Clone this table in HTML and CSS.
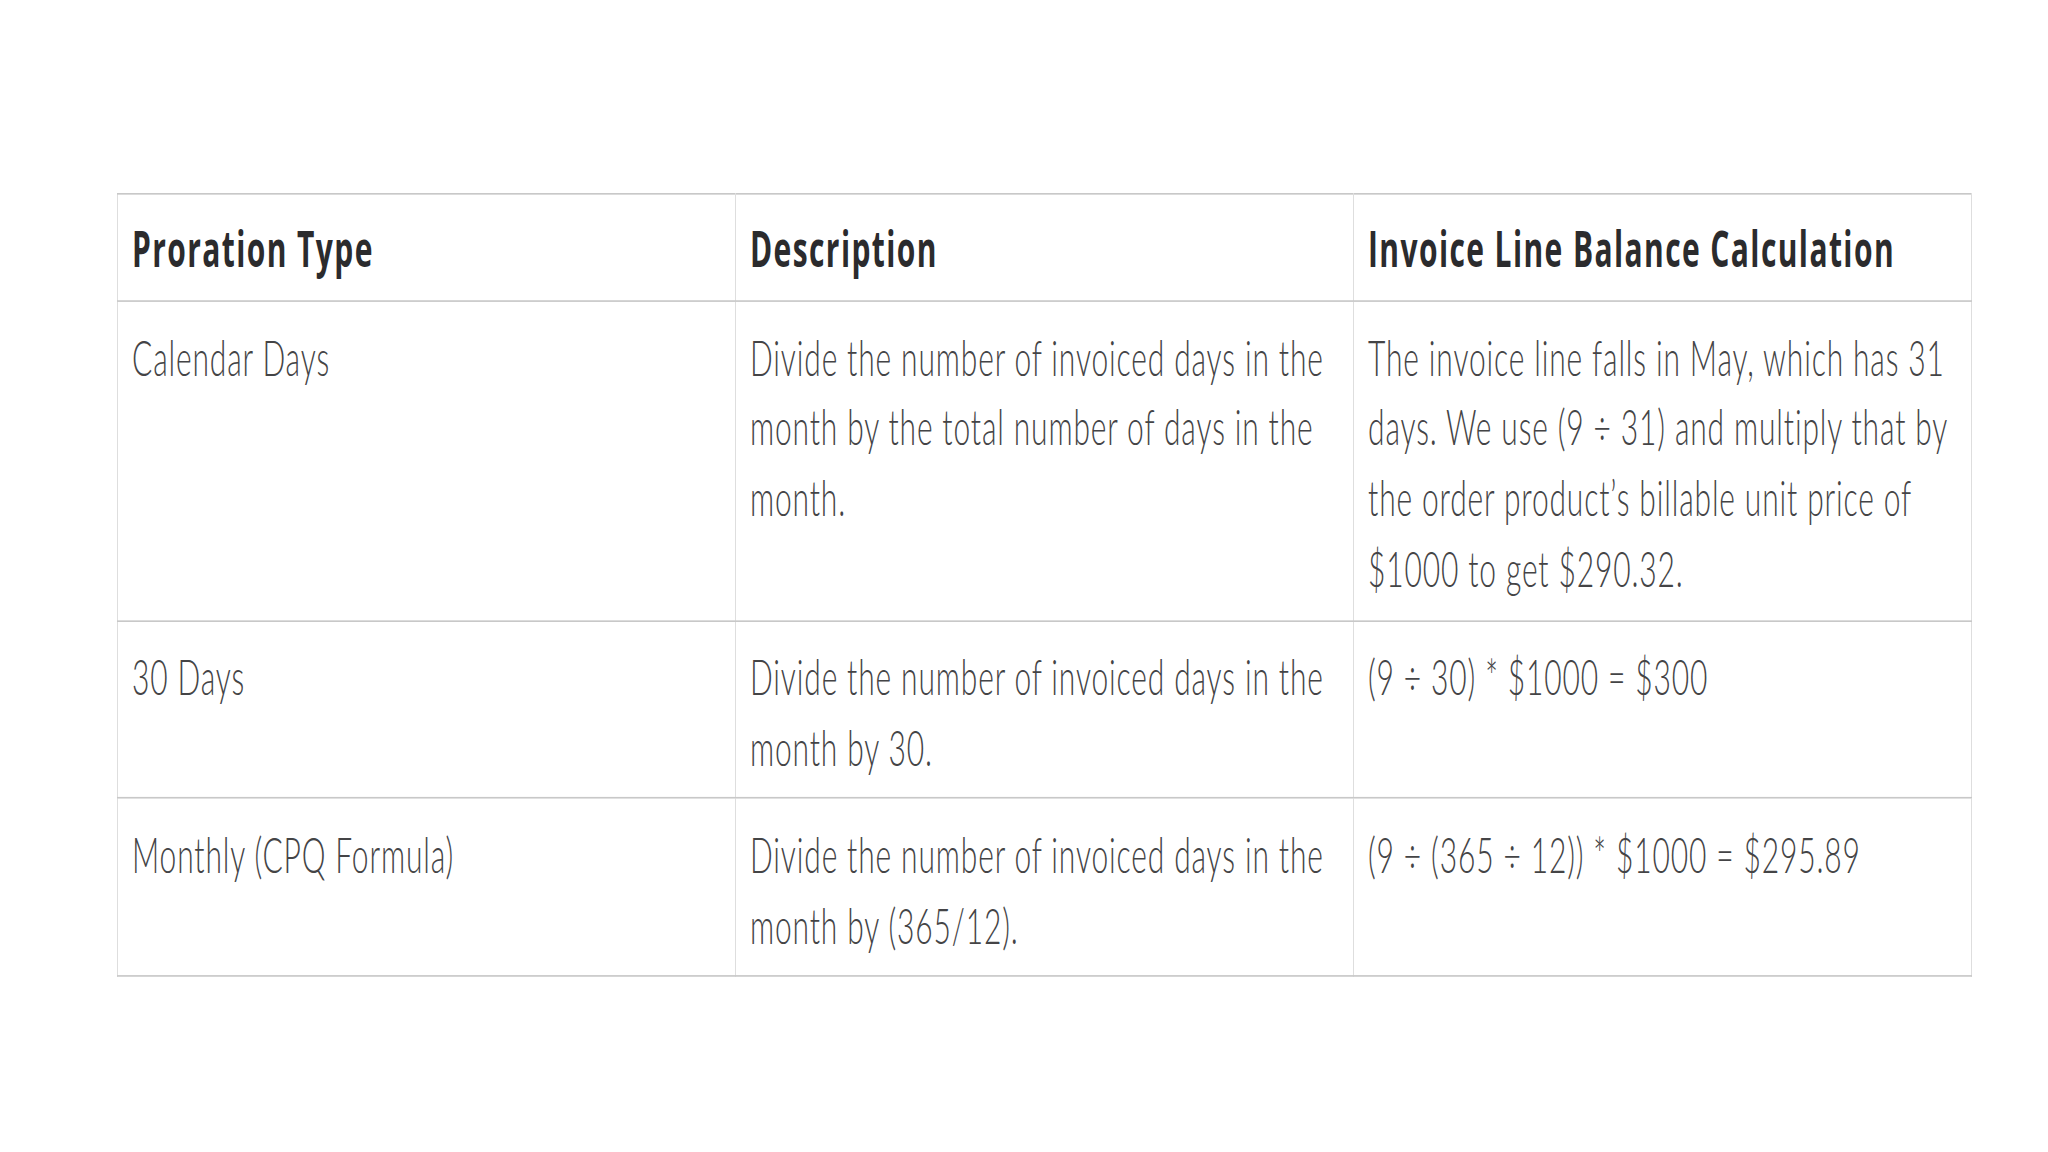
FILE: index.html
```html
<!DOCTYPE html>
<html lang="en">
<head>
<meta charset="utf-8">
<title>Proration Types</title>
<link rel="stylesheet" href="styles.css">
</head>
<body>
<div class="stage">
  <table class="proration">
    <colgroup><col class="c1"><col class="c2"><col class="c3"></colgroup>
    <thead>
      <tr>
        <th>Proration Type</th>
        <th>Description</th>
        <th>Invoice Line Balance Calculation</th>
      </tr>
    </thead>
    <tbody>
      <tr>
        <td>Calendar Days</td>
        <td>Divide the number of invoiced days in the month by the total number of days in the month.</td>
        <td>The invoice line falls in May, which has 31 days. We use (9 ÷ 31) and multiply that by the order product’s billable unit price of $1000 to get $290.32.</td>
      </tr>
      <tr>
        <td>30 Days</td>
        <td>Divide the number of invoiced days in the month by 30.</td>
        <td>(9 ÷ 30) * $1000 = $300</td>
      </tr>
      <tr>
        <td>Monthly (CPQ Formula)</td>
        <td>Divide the number of invoiced days in the month by (365/12).</td>
        <td>(9 ÷ (365 ÷ 12)) * $1000 = $295.89</td>
      </tr>
    </tbody>
  </table>
</div>
</body>
</html>
```
FILE: styles.css
```css
html, body {
  margin: 0;
  padding: 0;
  background: #ffffff;
}
body {
  width: 2048px;
  height: 1152px;
  overflow: hidden;
}
.stage {
  margin: 193px 0 0 117px;
  width: 1854px;
  transform: scaleY(1.65);
  transform-origin: 0 0;
}
.proration {
  width: 1854px;
  border-collapse: collapse;
  table-layout: fixed;
  font-family: Lato, "Open Sans", sans-serif;
  color: #3e3e3c;
}
.proration col { width: 618px; }
.proration th,
.proration td {
  text-align: left;
  vertical-align: top;
  padding: 11.5px 6px 10px 14px;
  line-height: 42.7px;
  border-left: 1px solid #dedede;
  border-right: 1px solid #dedede;
  border-top: 1px solid #c8c8c8;
  border-bottom: 1px solid #c8c8c8;
}
.proration th {
  font-family: "Open Sans", Lato, sans-serif;
  font-weight: 700;
  font-size: 30px;
  letter-spacing: 1.4px;
  color: #2b2b2d;
}
.proration td {
  font-weight: 300;
  font-size: 30px;
  letter-spacing: 0.85px;
  color: #444446;
}
```
